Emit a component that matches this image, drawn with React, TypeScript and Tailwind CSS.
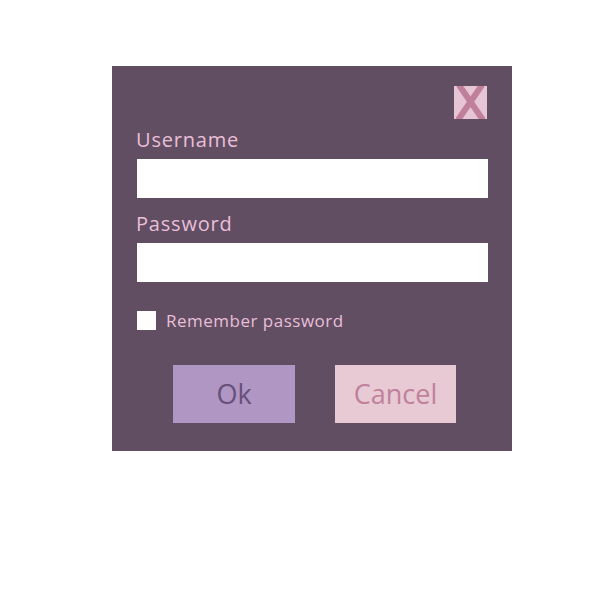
import React, { useState } from 'react';

export default function App() {
  const [username, setUsername] = useState('');
  const [password, setPassword] = useState('');
  const [remember, setRemember] = useState(false);

  return (
    <div className="min-h-[600px] w-[600px] bg-white pt-[66px] pl-[112px] font-['Open_Sans',sans-serif]">
      <div className="w-[400px] h-[385px] bg-[#614e63] pt-[20px] px-[24px]">
        <div className="flex justify-end pr-[1px]">
          <button className="w-[33px] h-[33px] bg-[#e6c5d4] overflow-hidden" aria-label="Close">
            <svg viewBox="0 0 33 33" className="w-[33px] h-[33px] block">
              <line x1="5" y1="-1" x2="29" y2="34" stroke="#c07f9b" strokeWidth="6" />
              <line x1="28" y1="-1" x2="4" y2="34" stroke="#c07f9b" strokeWidth="6" />
            </svg>
          </button>
        </div>

        <label className="block mt-[9px] text-[20px] leading-[24px] tracking-[0.8px] text-[#e9bfd8]">Username</label>
        <input
          value={username}
          onChange={(e) => setUsername(e.target.value)}
          className="block mt-[7px] ml-[1px] w-[351px] h-[39px] bg-white outline-none px-2"
        />

        <label className="block mt-[14px] text-[20px] leading-[24px] tracking-[0.8px] text-[#e9bfd8]">Password</label>
        <input
          type="password"
          value={password}
          onChange={(e) => setPassword(e.target.value)}
          className="block mt-[7px] ml-[1px] w-[351px] h-[39px] bg-white outline-none px-2"
        />

        <label className="flex items-center mt-[29px] ml-[1px] h-[19px] cursor-pointer">
          <span
            onClick={() => setRemember(!remember)}
            className="w-[19px] h-[19px] bg-white flex items-center justify-center text-[#614e63] text-[13px]"
          >
            {remember ? '✓' : ''}
          </span>
          <span className="ml-[10px] text-[17px] tracking-[0.5px] text-[#e9bfd8]">Remember password</span>
        </label>

        <div className="flex gap-[40px] mt-[35px] pl-[37px]">
          <button className="w-[122px] h-[58px] bg-[#b096c2] text-[#67507a] text-[27px]">Ok</button>
          <button className="w-[121px] h-[58px] bg-[#e8cad5] text-[#c0819b] text-[27px]">Cancel</button>
        </div>
      </div>
    </div>
  );
}
